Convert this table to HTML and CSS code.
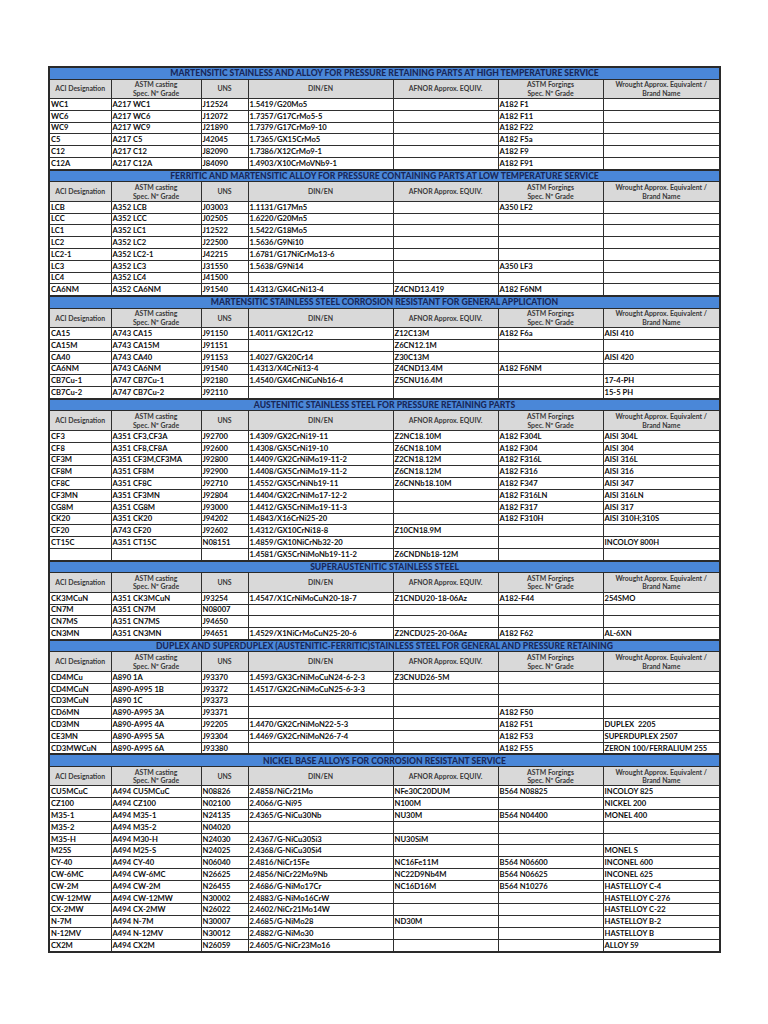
FILE: index.html
```html
<!DOCTYPE html>
<html>
<head>
<meta charset="utf-8">
<link rel="stylesheet" href="styles.css">
</head>
<body>
<table class="sheet">
<colgroup>
<col class="c1"><col class="c2"><col class="c3"><col class="c4"><col class="c5"><col class="c6"><col class="c7">
</colgroup>
<tbody>
<tr class="sec"><td colspan="7">MARTENSITIC STAINLESS AND ALLOY FOR PRESSURE RETAINING PARTS AT HIGH TEMPERATURE SERVICE</td></tr>
<tr class="hd"><td>ACI Designation</td><td>ASTM casting<br>Spec. Nº Grade</td><td>UNS</td><td>DIN/EN</td><td>AFNOR Approx. EQUIV.</td><td>ASTM Forgings<br>Spec. Nº Grade</td><td>Wrought Approx. Equivalent /<br>Brand Name</td></tr>
<tr><td>WC1</td><td>A217 WC1</td><td>J12524</td><td>1.5419/G20Mo5</td><td></td><td>A182 F1</td><td></td></tr>
<tr><td>WC6</td><td>A217 WC6</td><td>J12072</td><td>1.7357/G17CrMo5-5</td><td></td><td>A182 F11</td><td></td></tr>
<tr><td>WC9</td><td>A217 WC9</td><td>J21890</td><td>1.7379/G17CrMo9-10</td><td></td><td>A182 F22</td><td></td></tr>
<tr><td>C5</td><td>A217 C5</td><td>J42045</td><td>1.7365/GX15CrMo5</td><td></td><td>A182 F5a</td><td></td></tr>
<tr><td>C12</td><td>A217 C12</td><td>J82090</td><td>1.7386/X12CrMo9-1</td><td></td><td>A182 F9</td><td></td></tr>
<tr><td>C12A</td><td>A217 C12A</td><td>J84090</td><td>1.4903/X10CrMoVNb9-1</td><td></td><td>A182 F91</td><td></td></tr>

<tr class="sec"><td colspan="7">FERRITIC AND MARTENSITIC ALLOY FOR PRESSURE CONTAINING PARTS AT LOW TEMPERATURE SERVICE</td></tr>
<tr class="hd"><td>ACI Designation</td><td>ASTM casting<br>Spec. Nº Grade</td><td>UNS</td><td>DIN/EN</td><td>AFNOR Approx. EQUIV.</td><td>ASTM Forgings<br>Spec. Nº Grade</td><td>Wrought Approx. Equivalent /<br>Brand Name</td></tr>
<tr><td>LCB</td><td>A352 LCB</td><td>J03003</td><td>1.1131/G17Mn5</td><td></td><td>A350 LF2</td><td></td></tr>
<tr><td>LCC</td><td>A352 LCC</td><td>J02505</td><td>1.6220/G20Mn5</td><td></td><td></td><td></td></tr>
<tr><td>LC1</td><td>A352 LC1</td><td>J12522</td><td>1.5422/G18Mo5</td><td></td><td></td><td></td></tr>
<tr><td>LC2</td><td>A352 LC2</td><td>J22500</td><td>1.5636/G9Ni10</td><td></td><td></td><td></td></tr>
<tr><td>LC2-1</td><td>A352 LC2-1</td><td>J42215</td><td>1.6781/G17NiCrMo13-6</td><td></td><td></td><td></td></tr>
<tr><td>LC3</td><td>A352 LC3</td><td>J31550</td><td>1.5638/G9Ni14</td><td></td><td>A350 LF3</td><td></td></tr>
<tr><td>LC4</td><td>A352 LC4</td><td>J41500</td><td></td><td></td><td></td><td></td></tr>
<tr><td>CA6NM</td><td>A352 CA6NM</td><td>J91540</td><td>1.4313/GX4CrNi13-4</td><td>Z4CND13.419</td><td>A182 F6NM</td><td></td></tr>

<tr class="sec"><td colspan="7">MARTENSITIC STAINLESS STEEL CORROSION RESISTANT FOR GENERAL APPLICATION</td></tr>
<tr class="hd"><td>ACI Designation</td><td>ASTM casting<br>Spec. Nº Grade</td><td>UNS</td><td>DIN/EN</td><td>AFNOR Approx. EQUIV.</td><td>ASTM Forgings<br>Spec. Nº Grade</td><td>Wrought Approx. Equivalent /<br>Brand Name</td></tr>
<tr><td>CA15</td><td>A743 CA15</td><td>J91150</td><td>1.4011/GX12Cr12</td><td>Z12C13M</td><td>A182 F6a</td><td>AISI 410</td></tr>
<tr><td>CA15M</td><td>A743 CA15M</td><td>J91151</td><td></td><td>Z6CN12.1M</td><td></td><td></td></tr>
<tr><td>CA40</td><td>A743 CA40</td><td>J91153</td><td>1.4027/GX20Cr14</td><td>Z30C13M</td><td></td><td>AISI 420</td></tr>
<tr><td>CA6NM</td><td>A743 CA6NM</td><td>J91540</td><td>1.4313/X4CrNi13-4</td><td>Z4CND13.4M</td><td>A182 F6NM</td><td></td></tr>
<tr><td>CB7Cu-1</td><td>A747 CB7Cu-1</td><td>J92180</td><td>1.4540/GX4CrNiCuNb16-4</td><td>Z5CNU16.4M</td><td></td><td>17-4-PH</td></tr>
<tr><td>CB7Cu-2</td><td>A747 CB7Cu-2</td><td>J92110</td><td></td><td></td><td></td><td>15-5 PH</td></tr>

<tr class="sec"><td colspan="7">AUSTENITIC STAINLESS STEEL FOR PRESSURE RETAINING PARTS</td></tr>
<tr class="hd"><td>ACI Designation</td><td>ASTM casting<br>Spec. Nº Grade</td><td>UNS</td><td>DIN/EN</td><td>AFNOR Approx. EQUIV.</td><td>ASTM Forgings<br>Spec. Nº Grade</td><td>Wrought Approx. Equivalent /<br>Brand Name</td></tr>
<tr><td>CF3</td><td>A351 CF3,CF3A</td><td>J92700</td><td>1.4309/GX2CrNi19-11</td><td>Z2NC18.10M</td><td>A182 F304L</td><td>AISI 304L</td></tr>
<tr><td>CF8</td><td>A351 CF8,CF8A</td><td>J92600</td><td>1.4308/GX5CrNi19-10</td><td>Z6CN18.10M</td><td>A182 F304</td><td>AISI 304</td></tr>
<tr><td>CF3M</td><td>A351 CF3M,CF3MA</td><td>J92800</td><td>1.4409/GX2CrNiMo19-11-2</td><td>Z2CN18.12M</td><td>A182 F316L</td><td>AISI 316L</td></tr>
<tr><td>CF8M</td><td>A351 CF8M</td><td>J92900</td><td>1.4408/GX5CrNiMo19-11-2</td><td>Z6CN18.12M</td><td>A182 F316</td><td>AISI 316</td></tr>
<tr><td>CF8C</td><td>A351 CF8C</td><td>J92710</td><td>1.4552/GX5CrNiNb19-11</td><td>Z6CNNb18.10M</td><td>A182 F347</td><td>AISI 347</td></tr>
<tr><td>CF3MN</td><td>A351 CF3MN</td><td>J92804</td><td>1.4404/GX2CrNiMo17-12-2</td><td></td><td>A182 F316LN</td><td>AISI 316LN</td></tr>
<tr><td>CG8M</td><td>A351 CG8M</td><td>J93000</td><td>1.4412/GX5CrNiMo19-11-3</td><td></td><td>A182 F317</td><td>AISI 317</td></tr>
<tr><td>CK20</td><td>A351 CK20</td><td>J94202</td><td>1.4843/X16CrNi25-20</td><td></td><td>A182 F310H</td><td>AISI 310H;310S</td></tr>
<tr><td>CF20</td><td>A743 CF20</td><td>J92602</td><td>1.4312/GX10CrNi18-8</td><td>Z10CN18.9M</td><td></td><td></td></tr>
<tr><td>CT15C</td><td>A351 CT15C</td><td>N08151</td><td>1.4859/GX10NiCrNb32-20</td><td></td><td></td><td>INCOLOY 800H</td></tr>
<tr><td></td><td></td><td></td><td>1.4581/GX5CrNiMoNb19-11-2</td><td>Z6CNDNb18-12M</td><td></td><td></td></tr>

<tr class="sec"><td colspan="7">SUPERAUSTENITIC STAINLESS STEEL</td></tr>
<tr class="hd"><td>ACI Designation</td><td>ASTM casting<br>Spec. Nº Grade</td><td>UNS</td><td>DIN/EN</td><td>AFNOR Approx. EQUIV.</td><td>ASTM Forgings<br>Spec. Nº Grade</td><td>Wrought Approx. Equivalent /<br>Brand Name</td></tr>
<tr><td>CK3MCuN</td><td>A351 CK3MCuN</td><td>J93254</td><td>1.4547/X1CrNiMoCuN20-18-7</td><td>Z1CNDU20-18-06Az</td><td>A182-F44</td><td>254SMO</td></tr>
<tr><td>CN7M</td><td>A351 CN7M</td><td>N08007</td><td></td><td></td><td></td><td></td></tr>
<tr><td>CN7MS</td><td>A351 CN7MS</td><td>J94650</td><td></td><td></td><td></td><td></td></tr>
<tr><td>CN3MN</td><td>A351 CN3MN</td><td>J94651</td><td>1.4529/X1NiCrMoCuN25-20-6</td><td>Z2NCDU25-20-06Az</td><td>A182 F62</td><td>AL-6XN</td></tr>

<tr class="sec"><td colspan="7">DUPLEX AND SUPERDUPLEX (AUSTENITIC-FERRITIC)STAINLESS STEEL FOR GENERAL AND PRESSURE RETAINING</td></tr>
<tr class="hd"><td>ACI Designation</td><td>ASTM casting<br>Spec. Nº Grade</td><td>UNS</td><td>DIN/EN</td><td>AFNOR Approx. EQUIV.</td><td>ASTM Forgings<br>Spec. Nº Grade</td><td>Wrought Approx. Equivalent /<br>Brand Name</td></tr>
<tr><td>CD4MCu</td><td>A890 1A</td><td>J93370</td><td>1.4593/GX3CrNiMoCuN24-6-2-3</td><td>Z3CNUD26-5M</td><td></td><td></td></tr>
<tr><td>CD4MCuN</td><td>A890-A995 1B</td><td>J93372</td><td>1.4517/GX2CrNiMoCuN25-6-3-3</td><td></td><td></td><td></td></tr>
<tr><td>CD3MCuN</td><td>A890 1C</td><td>J93373</td><td></td><td></td><td></td><td></td></tr>
<tr><td>CD6MN</td><td>A890-A995 3A</td><td>J93371</td><td></td><td></td><td>A182 F50</td><td></td></tr>
<tr><td>CD3MN</td><td>A890-A995 4A</td><td>J92205</td><td>1.4470/GX2CrNiMoN22-5-3</td><td></td><td>A182 F51</td><td>DUPLEX&nbsp;&nbsp;2205</td></tr>
<tr><td>CE3MN</td><td>A890-A995 5A</td><td>J93304</td><td>1.4469/GX2CrNiMoN26-7-4</td><td></td><td>A182 F53</td><td>SUPERDUPLEX 2507</td></tr>
<tr><td>CD3MWCuN</td><td>A890-A995 6A</td><td>J93380</td><td></td><td></td><td>A182 F55</td><td>ZERON 100/FERRALIUM 255</td></tr>

<tr class="sec"><td colspan="7">NICKEL BASE ALLOYS FOR CORROSION RESISTANT SERVICE</td></tr>
<tr class="hd"><td>ACI Designation</td><td>ASTM casting<br>Spec. Nº Grade</td><td>UNS</td><td>DIN/EN</td><td>AFNOR Approx. EQUIV.</td><td>ASTM Forgings<br>Spec. Nº Grade</td><td>Wrought Approx. Equivalent /<br>Brand Name</td></tr>
<tr><td>CU5MCuC</td><td>A494 CU5MCuC</td><td>N08826</td><td>2.4858/NiCr21Mo</td><td>NFe30C20DUM</td><td>B564 N08825</td><td>INCOLOY 825</td></tr>
<tr><td>CZ100</td><td>A494 CZ100</td><td>N02100</td><td>2.4066/G-Ni95</td><td>N100M</td><td></td><td>NICKEL 200</td></tr>
<tr><td>M35-1</td><td>A494 M35-1</td><td>N24135</td><td>2.4365/G-NiCu30Nb</td><td>NU30M</td><td>B564 N04400</td><td>MONEL 400</td></tr>
<tr><td>M35-2</td><td>A494 M35-2</td><td>N04020</td><td></td><td></td><td></td><td></td></tr>
<tr><td>M35-H</td><td>A494 M30-H</td><td>N24030</td><td>2.4367/G-NiCu30Si3</td><td>NU30SiM</td><td></td><td></td></tr>
<tr><td>M25S</td><td>A494 M25-S</td><td>N24025</td><td>2.4368/G-NiCu30Si4</td><td></td><td></td><td>MONEL S</td></tr>
<tr><td>CY-40</td><td>A494 CY-40</td><td>N06040</td><td>2.4816/NiCr15Fe</td><td>NC16Fe11M</td><td>B564 N06600</td><td>INCONEL 600</td></tr>
<tr><td>CW-6MC</td><td>A494 CW-6MC</td><td>N26625</td><td>2.4856/NiCr22Mo9Nb</td><td>NC22D9Nb4M</td><td>B564 N06625</td><td>INCONEL 625</td></tr>
<tr><td>CW-2M</td><td>A494 CW-2M</td><td>N26455</td><td>2.4686/G-NiMo17Cr</td><td>NC16D16M</td><td>B564 N10276</td><td>HASTELLOY C-4</td></tr>
<tr><td>CW-12MW</td><td>A494 CW-12MW</td><td>N30002</td><td>2.4883/G-NiMo16CrW</td><td></td><td></td><td>HASTELLOY C-276</td></tr>
<tr><td>CX-2MW</td><td>A494 CX-2MW</td><td>N26022</td><td>2.4602/NiCr21Mo14W</td><td></td><td></td><td>HASTELLOY C-22</td></tr>
<tr><td>N-7M</td><td>A494 N-7M</td><td>N30007</td><td>2.4685/G-NiMo28</td><td>ND30M</td><td></td><td>HASTELLOY B-2</td></tr>
<tr><td>N-12MV</td><td>A494 N-12MV</td><td>N30012</td><td>2.4882/G-NiMo30</td><td></td><td></td><td>HASTELLOY B</td></tr>
<tr><td>CX2M</td><td>A494 CX2M</td><td>N26059</td><td>2.4605/G-NiCr23Mo16</td><td></td><td></td><td>ALLOY 59</td></tr>
</tbody>
</table>
</body>
</html>
```
FILE: styles.css
```css
html, body {
  margin: 0;
  padding: 0;
  background: #ffffff;
}
body {
  padding: 66px 0 0 48px;
  font-family: Lato, "Liberation Sans", sans-serif;
}
.sheet {
  border-collapse: collapse;
  table-layout: fixed;
  width: 671px;
  border: 2px solid #2a2a2a;
}
.c1 { width: 62px; }
.c2 { width: 90px; }
.c3 { width: 47px; }
.c4 { width: 145px; }
.c5 { width: 105px; }
.c6 { width: 105px; }
.c7 { width: 117px; }
.sheet td {
  border: 1px solid #2f2f2f;
  padding: 0 0 0 1px;
  height: 10.8px;
  font-size: 7.65px;
  line-height: 9px;
  font-weight: 700;
  color: #0d0d0d;
  white-space: nowrap;
  overflow: hidden;
  vertical-align: middle;
}
.sheet tr.sec td {
  background: #4a87d8;
  color: #18285a;
  text-align: center;
  font-size: 8.6px;
  line-height: 10px;
  height: 10.5px;
  font-weight: 900;
  padding: 0;
  border-top: 2px solid #2a2a2a;
  border-bottom: 1.5px solid #2a2a2a;
}
.sheet tr.hd td {
  background: #d9d9d9;
  color: #3a3a3a;
  text-align: center;
  font-size: 6.9px;
  line-height: 8.6px;
  height: 18.5px;
  padding: 0;
}
```
